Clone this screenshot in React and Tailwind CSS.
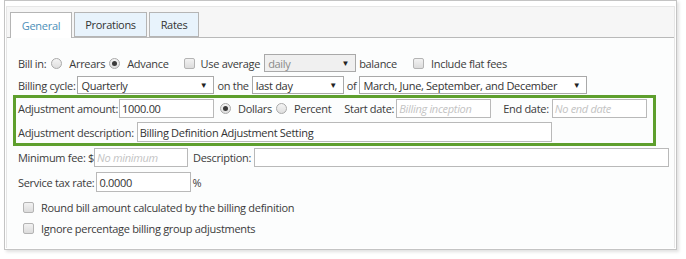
import React from 'react';

const Radio = ({ checked, className = '' }) => (
  <span className={`inline-flex h-[11px] w-[11px] shrink-0 items-center justify-center rounded-full border border-[#a9a9a9] bg-gradient-to-b from-[#f4f4f4] to-[#dedede] ${className}`}>
    {checked && <span className="h-[5px] w-[5px] rounded-full bg-[#3a3a3a]" />}
  </span>
);

const Check = ({ className = '' }) => (
  <span className={`inline-block h-[11px] w-[11px] shrink-0 rounded-[2px] border border-[#b4b4b4] bg-gradient-to-b from-[#f2f2f2] to-[#dcdcdc] ${className}`} />
);

const Select = ({ value, className = '', disabled }) => (
  <span className={`flex h-[18px] shrink-0 items-center justify-between border border-[#a9a9a9] pl-[3px] pr-[6px] ${disabled ? 'bg-[#f0f0f0] text-[#8a8a8a]' : 'bg-white text-[#333]'} ${className}`}>
    <span>{value}</span>
    <span className="text-[8px] text-[#222]">▼</span>
  </span>
);

const Input = ({ value, placeholder, className = '' }) => (
  <span className={`flex h-[19px] shrink-0 items-center border border-[#b9b9b9] bg-white pl-[2px] ${className}`}>
    {value ? <span className="text-[#333]">{value}</span> : <span className="italic text-[#c3c3c3]">{placeholder}</span>}
  </span>
);

export default function App() {
  return (
    <div className="h-[259px] w-[686px] whitespace-nowrap bg-white pl-[4px] text-[11px] leading-none tracking-[-0.3px] text-[#3b3b3b] [font-family:'Open_Sans',sans-serif]">
      <div className="h-[250px] w-[673px] border border-[#c4c4c4] shadow-[2px_2px_3px_rgba(0,0,0,0.12)]">
        <div className="mx-[1px] mt-[5px] h-[242px] border-x border-t border-[#e6e6e6]">
          {/* tab strip */}
          <div className="flex h-[31px] items-end gap-[2px] border-b border-[#b9b9b9] bg-[#f6f6f6] pl-[3px]">
            <div className="-mb-px flex h-[26px] w-[62px] items-center justify-center border border-b-0 border-[#b5b5b5] bg-white text-[#4d8fb8]">General</div>
            <div className="flex h-[25px] w-[73px] items-center justify-center border border-[#b5b5b5] bg-[#e8f3fc] text-[#333]">Prorations</div>
            <div className="flex h-[25px] w-[50px] items-center justify-center border border-[#b5b5b5] bg-[#e8f3fc] text-[#333]">Rates</div>
          </div>

          <div className="flex h-[210px] flex-col bg-[#fcfdfd] pl-[11px] pt-[16px]">
            {/* Bill in */}
            <div className="flex h-[18px] items-center">
              <span>Bill in:</span>
              <Radio className="ml-[5px]" />
              <span className="ml-[7px]">Arrears</span>
              <Radio checked className="ml-[4px]" />
              <span className="ml-[7px]">Advance</span>
              <Check className="ml-[15px]" />
              <span className="ml-[6px]">Use average</span>
              <Select disabled value="daily" className="ml-[4px] w-[92px]" />
              <span className="ml-[3px]">balance</span>
              <Check className="ml-[16px]" />
              <span className="ml-[7px]">Include flat fees</span>
            </div>

            {/* Billing cycle */}
            <div className="mt-[4px] flex h-[18px] items-center">
              <span>Billing cycle:</span>
              <Select value="Quarterly" className="ml-[2px] w-[137px]" />
              <span className="ml-[3px]">on the</span>
              <Select value="last day" className="ml-[3px] w-[92px]" />
              <span className="ml-[3px]">of</span>
              <Select value="March, June, September, and December" className="ml-[3px] w-[228px]" />
            </div>

            {/* Adjustment box */}
            <div className="-ml-[5px] mt-[1px] w-[643px] border-[3px] border-[#5e9f2d] pb-[1px] pl-[2px] pt-[1px]">
              <div className="flex h-[19px] items-center">
                <span>Adjustment amount:</span>
                <Input value="1000.00" className="ml-[1px] w-[95px]" />
                <Radio checked className="ml-[6px]" />
                <span className="ml-[7px]">Dollars</span>
                <Radio className="ml-[4px]" />
                <span className="ml-[7px]">Percent</span>
                <span className="ml-[13px]">Start date:</span>
                <Input placeholder="Billing inception" className="ml-[2px] w-[95px]" />
                <span className="ml-[12px]">End date:</span>
                <Input placeholder="No end date" className="ml-[3px] w-[95px]" />
              </div>
              <div className="mt-[4px] flex h-[20px] items-center">
                <span>Adjustment description:</span>
                <Input value="Billing Definition Adjustment Setting" className="ml-[3px] h-[20px] w-[415px]" />
              </div>
            </div>

            {/* Minimum fee */}
            <div className="mt-[2px] flex h-[19px] items-center">
              <span>Minimum fee: $</span>
              <Input placeholder="No minimum" className="w-[94px]" />
              <span className="ml-[5px]">Description:</span>
              <Input className="ml-[3px] w-[415px]" />
            </div>

            <div className="mt-[5px] flex h-[20px] items-center">
              <span>Service tax rate:</span>
              <Input value="0.0000" className="ml-[2px] h-[20px] w-[95px]" />
              <span className="ml-[1px]">%</span>
            </div>

            <div className="mt-[9px] flex h-[12px] items-center pl-[5px]">
              <Check />
              <span className="ml-[7px]">Round bill amount calculated by the billing definition</span>
            </div>
            <div className="mt-[9px] flex h-[12px] items-center pl-[5px]">
              <Check />
              <span className="ml-[7px]">Ignore percentage billing group adjustments</span>
            </div>
          </div>
        </div>
      </div>
    </div>
  );
}
